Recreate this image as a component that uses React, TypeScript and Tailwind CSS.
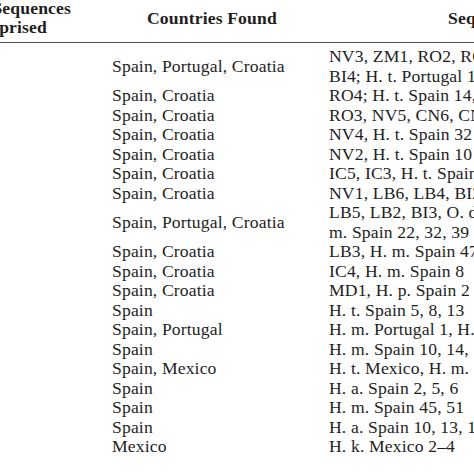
import React from "react";

const rows: { c: string; s: string[] }[] = [
  { c: "Spain, Portugal, Croatia", s: ["NV3, ZM1, RO2, RO1, CN1, BI1,", "BI4; H. t. Portugal 1, 2"] },
  { c: "Spain, Croatia", s: ["RO4; H. t. Spain 14, 21"] },
  { c: "Spain, Croatia", s: ["RO3, NV5, CN6, CN3, H. t. Spain 1"] },
  { c: "Spain, Croatia", s: ["NV4, H. t. Spain 32"] },
  { c: "Spain, Croatia", s: ["NV2, H. t. Spain 10"] },
  { c: "Spain, Croatia", s: ["IC5, IC3, H. t. Spain 3"] },
  { c: "Spain, Croatia", s: ["NV1, LB6, LB4, BI2, H. t. Spain 6"] },
  { c: "Spain, Portugal, Croatia", s: ["LB5, LB2, BI3, O. d. Portugal 1, H.", "m. Spain 22, 32, 39"] },
  { c: "Spain, Croatia", s: ["LB3, H. m. Spain 47"] },
  { c: "Spain, Croatia", s: ["IC4, H. m. Spain 8"] },
  { c: "Spain, Croatia", s: ["MD1, H. p. Spain 2"] },
  { c: "Spain", s: ["H. t. Spain 5, 8, 13"] },
  { c: "Spain, Portugal", s: ["H. m. Portugal 1, H. m. Spain 3"] },
  { c: "Spain", s: ["H. m. Spain 10, 14, 17"] },
  { c: "Spain, Mexico", s: ["H. t. Mexico, H. m. Mexico 1"] },
  { c: "Spain", s: ["H. a. Spain 2, 5, 6"] },
  { c: "Spain", s: ["H. m. Spain 45, 51"] },
  { c: "Spain", s: ["H. a. Spain 10, 13, 15"] },
  { c: "Mexico", s: ["H. k. Mexico 2–4"] },
];

export default function App() {
  return (
    <div className="w-[474px] h-[474px] overflow-hidden bg-white text-[#1e1e1e] font-['Liberation_Serif',serif] text-[17.6px] tracking-[0.15px]">
      <div className="-mt-[1px] flex font-bold leading-[19px] pb-[5px] border-b-[1.5px] border-[#505050]">
        <div className="w-[112px] shrink-0 flex flex-col">
          <div className="flex justify-end pr-[41px] whitespace-nowrap">Sequences</div>
          <div className="flex justify-end pr-[65px] whitespace-nowrap">Comprised</div>
        </div>
        <div className="w-[217px] shrink-0 flex items-center pl-[35px] whitespace-nowrap">Countries Found</div>
        <div className="flex-1 flex items-center pl-[119px] whitespace-nowrap overflow-hidden">Sequences</div>
      </div>
      <div className="pt-[4px] leading-[19.5px]">
        {rows.map((r, i) => (
          <div key={i} className="flex">
            <div className="w-[112px] shrink-0" />
            <div className="w-[217px] shrink-0 flex items-center whitespace-nowrap">{r.c}</div>
            <div className="flex-1 overflow-hidden">
              {r.s.map((l, j) => (
                <div key={j} className="whitespace-nowrap">{l}</div>
              ))}
            </div>
          </div>
        ))}
      </div>
    </div>
  );
}
